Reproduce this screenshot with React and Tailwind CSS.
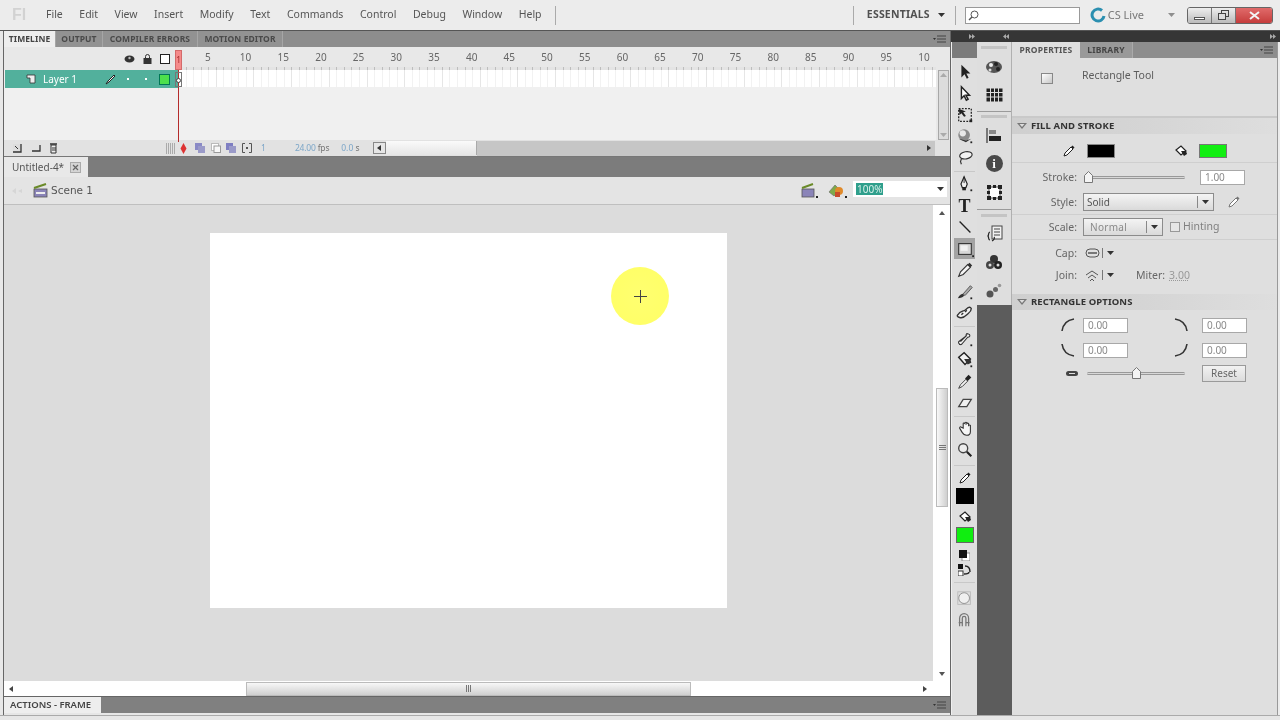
import React from "react";

const Ico = ({ w = 16, h = 16, vb, children, className = "" }) => (
  <svg width={w} height={h} viewBox={vb || `0 0 ${w} ${h}`} className={`shrink-0 ${className}`}>{children}</svg>
);

const Caret = ({ className = "" }) => (
  <svg width="7" height="4" viewBox="0 0 7 4" className={`shrink-0 ${className}`}><path d="M0 0h7L3.5 4z" fill="#333" /></svg>
);

const MenuLines = () => (
  <Ico w={14} h={9}>
    <path d="M0 3h3L1.5 5z" fill="#333" />
    <path d="M4 1h9M4 4h9M4 7h9" stroke="#444" strokeWidth="1.2" />
  </Ico>
);

const Pencil = ({ c = "#222" }) => (
  <Ico w={14} h={14}>
    <path d="M2 12l1-3 6-6 2 2-6 6z" fill="#fff" stroke={c} strokeWidth="1" />
    <path d="M9 3l1.5-1.5 2 2L11 5z" fill={c} />
  </Ico>
);

const Bucket = () => (
  <Ico w={14} h={14}>
    <path d="M2 6l5-4 5 5-5 4z" fill="#fff" stroke="#222" strokeWidth="1.2" />
    <path d="M7 7l5 0 1 3-3 2z" fill="#222" />
  </Ico>
);

const tools = {
  arrow: <path d="M6 2v14l3.5-3.5 2.5 5 2-1-2.5-4.8H16z" fill="#222" />,
  sub: <path d="M6 3v13l3-3 2.5 5 2-1-2.5-4.5H15z" fill="#fff" stroke="#222" strokeWidth="1.6" />,
  free: (
    <g>
      <rect x="3" y="3" width="14" height="14" fill="none" stroke="#222" strokeWidth="1.4" strokeDasharray="2 1.5" />
      <path d="M3 3l8 3-3 1 3 4-2 1-3-4-2 2z" fill="#222" />
      <rect x="15" y="15" width="3" height="3" fill="#222" />
    </g>
  ),
  ball: (
    <g>
      <circle cx="9" cy="9" r="6.5" fill="#8a8a8a" />
      <circle cx="7.5" cy="7" r="3.5" fill="#e8e8e8" />
      <path d="M3 13l8 4 6-4-6 2z" fill="#333" />
      <rect x="16" y="16" width="2" height="2" fill="#222" />
    </g>
  ),
  lasso: (
    <g fill="none" stroke="#333" strokeWidth="1.3">
      <ellipse cx="11" cy="7" rx="7" ry="4" transform="rotate(-10 11 7)" fill="#f2f2f2" />
      <path d="M6 11l-1 3 1 3" />
    </g>
  ),
  pen: (
    <g>
      <path d="M9 2l3.5 8-1.5 4H7l-1.5-4z" fill="#f0f0f0" stroke="#222" strokeWidth="1.3" />
      <path d="M9 2v7" stroke="#222" />
      <rect x="7" y="14" width="4" height="3" fill="#222" />
      <rect x="16" y="16" width="2" height="2" fill="#222" />
    </g>
  ),
  line: <path d="M4 4l12 12" stroke="#222" strokeWidth="1.5" />,
  rect: (
    <g>
      <rect x="3" y="4" width="14" height="12" fill="#d8d8d8" stroke="#333" strokeWidth="1.2" />
      <rect x="5" y="6" width="8" height="6" fill="#f2f2f2" />
      <rect x="18" y="17" width="2" height="2" fill="#222" />
    </g>
  ),
  pencil: (
    <g>
      <path d="M3 17l2-5 8-8 3 3-8 8z" fill="#f4f4f4" stroke="#333" strokeWidth="1.2" />
      <path d="M13 4l2-2 3 3-2 2z" fill="#333" />
    </g>
  ),
  brush: (
    <g>
      <path d="M2 17c2-4 4-5 6-5l1 2c-1 2-4 3-7 3z" fill="#333" />
      <path d="M8 12l8-9 2 2-8 9z" fill="#aaa" stroke="#333" strokeWidth=".8" />
      <rect x="16" y="16" width="2" height="2" fill="#222" />
    </g>
  ),
  deco: (
    <g fill="none" stroke="#333" strokeWidth="1.5">
      <path d="M2 12c3-5 6-3 9-6s5-3 6-1c0 4-3 5-5 7s-5 4-8 3-3-2-2-3z" fill="#f0f0f0" />
      <path d="M6 12l2-2M10 9l2-2" />
    </g>
  ),
  bone: (
    <g>
      <path d="M5 13l7-7M3 13c-1 2 1 2 1 3 1 0 2 1 3-1l6-7c2 0 3-1 2-3-1 0-1-1-3-1-1 1-1 2-1 3z" fill="#f2f2f2" stroke="#333" strokeWidth="1.2" />
      <rect x="16" y="16" width="2" height="2" fill="#222" />
    </g>
  ),
  bucket: (
    <g>
      <path d="M3 7l6-5 7 7-6 6z" fill="#f2f2f2" stroke="#222" strokeWidth="1.6" />
      <path d="M9 9h7l1 4-4 2z" fill="#333" />
      <rect x="16" y="16" width="2" height="2" fill="#222" />
    </g>
  ),
  drop: (
    <g>
      <path d="M3 17l2-4 6-6 2 2-6 6z" fill="#f2f2f2" stroke="#333" />
      <path d="M10 6l4-4 3 3-4 4z" fill="#222" />
    </g>
  ),
  eraser: <path d="M3 14l5-8h9l-5 8z" fill="#f0f0f0" stroke="#444" strokeWidth="1.4" />,
  hand: (
    <path d="M4 9l3 5c1 2 3 3 5 3 3 0 4-2 4-4V6c-1-1-2 0-2 1V4c-1-1-2 0-2 0V3c-1-1-2 0-2 0v1C9 3 8 3 8 4v5L6 8C5 7 4 8 4 9z" fill="#f6f6f6" stroke="#333" strokeWidth="1.2" />
  ),
  zoom: (
    <g>
      <circle cx="8" cy="8" r="5" fill="#ececec" stroke="#444" strokeWidth="1.5" />
      <path d="M12 12l5 5" stroke="#222" strokeWidth="2.4" />
    </g>
  ),
  sm: (
    <g>
      <circle cx="9" cy="9" r="6" fill="#f0f0f0" stroke="#888" />
      <rect x="2" y="2" width="14" height="14" fill="none" stroke="#bbb" />
    </g>
  ),
  st: (
    <g fill="none" stroke="#777" strokeWidth="1.4">
      <path d="M4 17V8a5 5 0 0 1 10 0v9" />
      <path d="M7 17V8a2 2 0 0 1 4 0v9" />
      <path d="M3 13h4M11 13h4" />
    </g>
  ),
};

const Tool = ({ n, active }) => (
  <div className="flex h-[21.5px] w-full items-center justify-center">
    <div className={`flex h-[21px] w-[21px] items-center justify-center ${active ? "bg-[#a3a3a3]" : ""}`}>
      {n === "t" ? (
        <span className="font-['Liberation_Serif',serif] text-[18px] leading-none font-bold text-[#222]">T</span>
      ) : (
        <Ico w={18} h={18} vb="0 0 20 20">{tools[n]}</Ico>
      )}
    </div>
  </div>
);

const ToolSep = ({ className = "" }) => <div className={`mx-[2px] h-px bg-[#c8c8c8] ${className}`} />;

const Toolbar = () => (
  <div className="flex h-full w-[27px] shrink-0 flex-col border-r border-[#8a8a8a] border-l border-l-[#f0f0f0] bg-[#dfdfdf]">
    <div className="h-[16px] shrink-0 bg-[#7b7b7b]" />
    <div className="mt-[3px] flex flex-col">
      <Tool n="arrow" />
      <Tool n="sub" />
      <Tool n="free" />
      <Tool n="ball" />
      <Tool n="lasso" />
      <ToolSep className="my-[2px]" />
      <Tool n="pen" />
      <Tool n="t" />
      <Tool n="line" />
      <Tool n="rect" active />
      <Tool n="pencil" />
      <Tool n="brush" />
      <Tool n="deco" />
      <ToolSep className="my-[1.5px]" />
      <Tool n="bone" />
      <Tool n="bucket" />
      <Tool n="drop" />
      <Tool n="eraser" />
      <ToolSep className="my-[1.5px]" />
      <Tool n="hand" />
      <Tool n="zoom" />
      <ToolSep className="mt-[4px] mb-[4px]" />
      <div className="flex h-[16px] items-center justify-center"><Pencil /></div>
      <div className="mx-auto mt-[2px] h-[16px] w-[18px] bg-black" />
      <div className="mt-[5px] flex h-[16px] items-center justify-center"><Bucket /></div>
      <div className="mx-auto mt-[2px] h-[16px] w-[18px] border border-[#666] bg-[#10ee10]" />
      <div className="mt-[6px] flex h-[12px] items-center justify-center">
        <Ico w={11} h={11}><rect x="3" y="3" width="8" height="8" fill="#fff" stroke="#888" /><rect x="0" y="0" width="8" height="8" fill="#111" /></Ico>
      </div>
      <div className="mt-[3px] flex h-[12px] items-center justify-center">
        <Ico w={13} h={12}><rect x="0" y="0" width="5" height="5" fill="#111" /><rect x="0" y="7" width="5" height="5" fill="#fff" stroke="#333" /><path d="M7 2c3 0 5 2 5 6M6 10c3 0 5-1 5-2" stroke="#222" fill="none" strokeWidth="1.4" /></Ico>
      </div>
      <ToolSep className="mt-[6px] mb-[5px]" />
      <Tool n="sm" />
      <Tool n="st" />
    </div>
  </div>
);

const DockIcon = ({ children }) => <div className="flex h-[28.5px] items-center justify-center">{children}</div>;

const Handle = ({ className = "" }) => <div className={`mx-[4px] h-[3px] bg-[#c4c4c4] ${className}`} />;

const Dock = () => (
  <div className="flex h-full w-[35px] shrink-0 flex-col bg-[#5c5c5c]">
    <div className="flex flex-col border-r border-[#b0b0b0] bg-[#dedede]">
      <Handle className="mt-[4px] mb-[3px]" />
      <DockIcon>
        <Ico w={18} h={15}><ellipse cx="9" cy="8" rx="8" ry="6" fill="#555" /><circle cx="6" cy="6" r="2" fill="#eee" /><circle cx="11" cy="5" r="2" fill="#222" /><circle cx="13" cy="10" r="2" fill="#222" /><circle cx="5" cy="11" r="1.5" fill="#ddd" /></Ico>
      </DockIcon>
      <DockIcon>
        <Ico w={17} h={14}>
          <rect x="0.5" y="0.5" width="16" height="13" fill="#222" />
          <path d="M0 4.5h17M0 9h17M4.5 0v14M8.5 0v14M12.5 0v14" stroke="#ddd" strokeWidth="1" />
        </Ico>
      </DockIcon>
      <div className="mt-[2px] h-px bg-[#9a9a9a]" />
      <Handle className="mt-[3px] mb-[3px]" />
      <DockIcon>
        <Ico w={16} h={15}><path d="M1 0v15" stroke="#555" strokeWidth="1.5" /><rect x="3" y="2" width="7" height="4" fill="#888" /><rect x="3" y="8" width="12" height="5" fill="#222" /></Ico>
      </DockIcon>
      <DockIcon>
        <div className="flex h-[17px] w-[17px] items-center justify-center rounded-full bg-[#4a4a4a] font-['Liberation_Serif',serif] text-[13px] leading-none font-bold text-white">i</div>
      </DockIcon>
      <DockIcon>
        <Ico w={15} h={15}><rect x="2" y="2" width="11" height="11" fill="#fff" stroke="#555" /><path d="M0 0h4v4H0zM11 0h4v4h-4zM0 11h4v4H0zM11 11h4v4h-4zM6 0h3v3H6zM6 12h3v3H6zM0 6h3v3H0zM12 6h3v3h-3z" fill="#222" /></Ico>
      </DockIcon>
      <div className="mt-[2px] h-px bg-[#9a9a9a]" />
      <Handle className="mt-[4px] mb-[3px]" />
      <DockIcon>
        <Ico w={18} h={17}><rect x="7" y="1" width="10" height="13" fill="#f2f2f2" stroke="#444" /><path d="M9 4h6M9 7h6M9 10h6" stroke="#444" /><path d="M5 7c-2 0-1 3-2 4 1 1 0 4 2 4M9 12c1 1 0 3-2 4" fill="none" stroke="#222" strokeWidth="1.2" /></Ico>
      </DockIcon>
      <DockIcon>
        <Ico w={16} h={15}><circle cx="8" cy="4" r="4" fill="#333" /><circle cx="4" cy="10" r="4" fill="#444" /><circle cx="12" cy="10" r="4" fill="#222" /><circle cx="4" cy="10" r="1.5" fill="#ddd" /><circle cx="12" cy="10" r="1.5" fill="#ddd" /></Ico>
      </DockIcon>
      <DockIcon>
        <Ico w={16} h={15}><circle cx="4" cy="11" r="3.5" fill="#555" /><circle cx="9.5" cy="6.5" r="2.5" fill="#666" /><circle cx="13.5" cy="2.5" r="1.8" fill="#999" /></Ico>
      </DockIcon>
    </div>
  </div>
);

const Lbl = ({ children }) => (
  <span className="w-[71px] shrink-0 pt-[1px] pr-[6px] text-right">{children}</span>
);

const Field = ({ v, w = "w-[45px]", dim }) => (
  <div className={`flex h-[15px] ${w} shrink-0 items-center border border-[#a8a8a8] bg-white pl-[4px] text-[10px] ${dim ? "text-[#9a9a9a]" : "text-[#8a8a8a]"}`}>{v}</div>
);

const Section = ({ t }) => (
  <div className="flex h-[16px] items-center gap-[4px] bg-gradient-to-r from-[#cfcfcf] via-[#d5d5d5] to-[#dedede] pl-[5px] text-[9.5px] font-bold tracking-[.1px] text-[#333]">
    <Ico w={10} h={6}><path d="M0 0h10L5 6z" fill="#777" /><path d="M2.5 1h5L5 4z" fill="#ddd" /></Ico>
    {t}
  </div>
);

const Slider = ({ w, at }) => (
  <div className={`relative h-[3px] ${w} shrink-0 rounded-sm border-y border-[#999] bg-[#d8d8d8]`}>
    <svg width="9" height="12" viewBox="0 0 9 12" className={`absolute top-[-6px] ${at}`}>
      <path d="M4.5 0.5L8.5 4.5v7h-8v-7z" fill="#f4f4f4" stroke="#777" />
    </svg>
  </div>
);

const Drop = ({ v, w, dim }) => (
  <div className={`flex h-[18px] ${w} shrink-0 items-center justify-between border border-[#8c8c8c] bg-gradient-to-b from-[#f4f4f4] to-[#dadada] pl-[3px] text-[10px] ${dim ? "text-[#8a8a8a]" : "text-[#555]"}`}>
    <span className={dim ? "pl-[3px] tracking-[.3px]" : ""}>{v}</span>
    <span className="flex items-center gap-[3px] pr-[3px]"><span className="h-[12px] w-px bg-[#888]" /><Caret className="mx-[1px]" /></span>
  </div>
);

const Corner = ({ d }) => (
  <Ico w={16} h={16} vb="0 0 16 16"><path d={d} fill="none" stroke="#333" strokeWidth="1.6" /></Ico>
);

const Properties = () => (
  <div className="flex min-w-0 flex-1 flex-col border-r border-[#999] bg-[#dfdfdf] text-[#666]">
    <div className="flex h-[16px] shrink-0 items-stretch bg-[#8d8d8d] text-[8.5px] font-bold tracking-[.2px]">
      <div className="flex w-[68px] items-center justify-center bg-[#dfdfdf] text-[#555]">PROPERTIES</div>
      <div className="flex w-[53px] items-center justify-center border-r border-[#aaa] bg-[#999] text-[#444]">LIBRARY</div>
      <div className="ml-auto flex items-center pr-[3px]"><MenuLines /></div>
    </div>
    <div className="flex h-[60px] shrink-0 items-start border-b-2 border-[#c9c9c9]">
      <div className="mt-[15px] ml-[29px] h-[11px] w-[12px] border border-[#888] bg-gradient-to-br from-white to-[#c8c8c8]" />
      <span className="mt-[10px] ml-[29px] text-[10.5px] leading-[14px] text-[#5c5c5c]">Rectangle Tool</span>
    </div>
    <Section t="FILL AND STROKE" />
    <div className="flex h-[29px] shrink-0 items-center border-b border-[#cfcfcf] pt-[6px]">
      <div className="ml-[50px]"><Pencil /></div>
      <div className="ml-[11px] h-[14px] w-[28px] border border-[#888] bg-black" />
      <div className="ml-[59px]"><Bucket /></div>
      <div className="ml-[11px] h-[14px] w-[28px] border border-[#777] bg-[#12ee12]" />
    </div>
    <div className="flex h-[27px] shrink-0 items-center pt-[1px] text-[10.5px]">
      <Lbl>Stroke:</Lbl>
      <Slider w="ml-[1px] w-[101px]" at="left-0" />
      <div className="ml-[15px]"><Field v="1.00" /></div>
    </div>
    <div className="flex h-[25px] shrink-0 items-center border-b border-[#cfcfcf] text-[10.5px]">
      <Lbl>Style:</Lbl>
      <Drop v="Solid" w="w-[131px]" />
      <div className="ml-[13px]"><Pencil c="#777" /></div>
    </div>
    <div className="flex h-[25px] shrink-0 items-center border-b border-[#cfcfcf] text-[10.5px]">
      <Lbl>Scale:</Lbl>
      <Drop v="Normal" w="w-[80px]" dim />
      <span className="ml-[7px] h-[10px] w-[10px] border border-[#999] bg-[#e6e6e6]" />
      <span className="ml-[3px] text-[#808080]">Hinting</span>
    </div>
    <div className="mt-[2px] flex h-[22px] shrink-0 items-center text-[10.5px]">
      <Lbl>Cap:</Lbl>
      <Ico w={16} h={10} className="ml-[2px]"><rect x="1" y="1" width="13" height="8" rx="4" fill="none" stroke="#555" /><path d="M3 5h9" stroke="#555" strokeWidth="1.5" /></Ico>
      <span className="ml-[1px] h-[10px] w-px bg-[#777]" />
      <Caret className="ml-[4px]" />
    </div>
    <div className="flex h-[22px] shrink-0 items-center text-[10.5px]">
      <Lbl>Join:</Lbl>
      <Ico w={14} h={11} className="ml-[2px]"><path d="M1 5l6-4 6 4M3 8l4-3 4 3M5 11l2-2 2 2" fill="none" stroke="#555" /></Ico>
      <span className="ml-[3px] h-[10px] w-px bg-[#777]" />
      <Caret className="ml-[4px]" />
      <span className="ml-[22px] pt-[1px]">Miter:</span>
      <span className="ml-[4px] pt-[1px] text-[#999] underline decoration-dotted">3.00</span>
    </div>
    <div className="mt-[8px] pt-0"><Section t="RECTANGLE OPTIONS" /></div>
    <div className="mt-[7px] flex h-[16px] shrink-0 items-center">
      <div className="ml-[48px]"><Corner d="M14 2C7 3 3 7 2 14" /></div>
      <div className="ml-[7px]"><Field v="0.00" /></div>
      <div className="ml-[45px]"><Corner d="M2 2c7 1 11 5 12 12" /></div>
      <div className="ml-[13px]"><Field v="0.00" /></div>
    </div>
    <div className="mt-[9px] flex h-[16px] shrink-0 items-center">
      <div className="ml-[48px]"><Corner d="M2 2c1 7 5 11 12 12" /></div>
      <div className="ml-[7px]"><Field v="0.00" /></div>
      <div className="ml-[45px]"><Corner d="M14 2c-1 7-5 11-12 12" /></div>
      <div className="ml-[13px]"><Field v="0.00" /></div>
    </div>
    <div className="mt-[7px] flex h-[17px] shrink-0 items-center">
      <Ico w={12} h={7} className="ml-[54px]"><rect x="0" y="1" width="12" height="5" rx="2.5" fill="#444" /><path d="M3 3.5h6" stroke="#ddd" /></Ico>
      <Slider w="ml-[9px] w-[98px]" at="left-[45px]" />
      <div className="ml-[17px] flex h-[17px] w-[44px] items-center justify-center border border-[#9a9a9a] bg-gradient-to-b from-[#f2f2f2] to-[#dcdcdc] text-[10px] text-[#666]">Reset</div>
    </div>
  </div>
);

const MENU = ["File", "Edit", "View", "Insert", "Modify", "Text", "Commands", "Control", "Debug", "Window", "Help"];
const NUMS = [5, 10, 15, 20, 25, 30, 35, 40, 45, 50, 55, 60, 65, 70, 75, 80, 85, 90, 95, 10];

const TopBar = () => (
  <div className="flex h-[30px] shrink-0 items-center bg-[#ececec] text-[#555]">
    <span className="ml-[12px] w-[34px] font-['Liberation_Sans',sans-serif] text-[16px] font-bold text-[#d2d2d2]">Fl</span>
    <div className="flex gap-[16.5px] text-[10.5px]">
      {MENU.map((m) => <span key={m}>{m}</span>)}
    </div>
    <div className="ml-[13px] h-[19px] w-px bg-[#aaa]" />
    <div className="ml-auto h-[19px] w-px bg-[#aaa]" />
    <span className="ml-[13px] text-[10.5px] font-bold tracking-[.2px] text-[#505050]">ESSENTIALS</span>
    <Caret className="ml-[8px]" />
    <div className="ml-[10px] h-[19px] w-px bg-[#aaa]" />
    <div className="ml-[9px] flex h-[17px] w-[115px] items-center border border-[#999] bg-white pl-[2px]">
      <Ico w={11} h={11}><circle cx="6.5" cy="4.5" r="3.5" fill="none" stroke="#555" /><path d="M4 7l-3 3" stroke="#555" strokeWidth="1.4" /></Ico>
    </div>
    <Ico w={16} h={16} className="ml-[10px]"><path d="M12 3.5A6 6 0 1 0 14 9" fill="none" stroke="#2b8fb0" strokeWidth="3" /></Ico>
    <span className="ml-[2px] text-[11px] text-[#777]">CS Live</span>
    <Caret className="ml-[24px] opacity-50" />
    <div className="mr-[7px] ml-[12px] flex h-[17px] w-[86px] overflow-hidden rounded-[3px] border border-[#666]">
      <div className="flex w-[24px] items-end justify-center border-r border-[#777] bg-gradient-to-b from-[#eee] to-[#bbb] pb-[3px]"><span className="h-[3px] w-[11px] border border-[#555] bg-white" /></div>
      <div className="flex w-[24px] items-center justify-center border-r border-[#777] bg-gradient-to-b from-[#eee] to-[#bbb]">
        <Ico w={11} h={10}><rect x="3.5" y="0.5" width="7" height="6" fill="none" stroke="#444" /><rect x="0.5" y="3.5" width="7" height="6" fill="#ddd" stroke="#444" /></Ico>
      </div>
      <div className="flex flex-1 items-center justify-center bg-gradient-to-b from-[#e06a6a] to-[#c63c3c]">
        <Ico w={11} h={9}><path d="M1 1l9 7M10 1L1 8" stroke="#f2f2f2" strokeWidth="2" /></Ico>
      </div>
    </div>
  </div>
);

const Tab = ({ t, w, active }) => (
  <div className={`flex ${w} items-center justify-center border-r border-[#a6a6a6] ${active ? "bg-[#eeeeee] text-[#444]" : "bg-[#929292] text-[#4a4a4a]"}`}>{t}</div>
);

const Timeline = () => (
  <div className="relative h-[110px] shrink-0 bg-[#f0f0f0] text-[#555]">
    <div className="flex h-[93px] items-stretch">
      <div className="flex w-[174px] shrink-0 flex-col">
        <div className="flex h-[23px] items-center justify-end gap-[8px] bg-[#e8e8e8] pr-[7px]">
          <Ico w={11} h={8}><ellipse cx="5.5" cy="4" rx="5" ry="3.5" fill="#333" /><circle cx="5.5" cy="3" r="1.2" fill="#bbb" /></Ico>
          <Ico w={9} h={10}><rect x="0.5" y="4" width="8" height="6" fill="#333" /><path d="M2.5 4V2.5a2 2 0 0 1 4 0V4" fill="none" stroke="#333" /></Ico>
          <span className="mr-[1px] h-[10px] w-[10px] border-[1.5px] border-[#222] bg-white" />
        </div>
        <div className="ml-[1px] flex h-[18px] items-center bg-[#52b09c] pl-[21px] text-white">
          <Ico w={10} h={10}><path d="M1 1h8v8H4V4H1z" fill="#eee" stroke="#333" strokeWidth=".8" /></Ico>
          <span className="ml-[7px] text-[10px]">Layer 1</span>
          <div className="ml-[28px]"><Ico w={12} h={12}><path d="M1 11l2-3 6-6 1 1-6 6z" fill="#fff" stroke="#222" /></Ico></div>
          <span className="ml-[10px] h-[2px] w-[2px] bg-white" />
          <span className="ml-[16px] h-[2px] w-[2px] bg-white" />
          <span className="ml-[12px] h-[11px] w-[11px] border border-[#075] bg-[#4de04d]" />
        </div>
        <div className="flex-1 bg-[#f0f0f0]" />
      </div>
      <div className="flex min-w-0 flex-1 flex-col">
        <div className="relative flex h-[23px] items-center overflow-hidden bg-[#e8e8e8] pb-[2px] text-[10px] text-[#666]">
          <div className="flex shrink-0 pl-[11px]">
            {NUMS.map((n, i) => (
              <span key={i} className="w-[37.7px] shrink-0 text-center">{n}</span>
            ))}
          </div>
          <div className="absolute right-0 bottom-0 left-0 h-[3px] bg-[repeating-linear-gradient(90deg,#bdbdbd_0,#bdbdbd_1px,#e4e4e4_1px,#e4e4e4_7.54px)]" />
        </div>
        <div className="h-[17px] bg-[repeating-linear-gradient(90deg,#e6e6e6_0,#e6e6e6_1px,#fff_1px,#fff_7.54px,#f2f2f2_7.54px,#f2f2f2_8.54px,#fff_8.54px,#fff_15.08px,#f2f2f2_15.08px,#f2f2f2_16.08px,#fff_16.08px,#fff_22.62px,#f2f2f2_22.62px,#f2f2f2_23.62px,#fff_23.62px,#fff_30.16px,#f2f2f2_30.16px,#f2f2f2_31.16px,#fff_31.16px,#fff_37.7px)]" />
        <div className="flex-1" />
      </div>
      <div className="flex w-[14px] shrink-0 flex-col bg-[#e8e8e8]">
        <div className="h-[23px] shrink-0" />
        <div className="ml-[2px] flex w-[11px] flex-1 flex-col border border-[#a8a8a8] bg-[#dcdcdc]">
          <div className="flex flex-1 items-start justify-center pt-[2px]"><Ico w={7} h={4}><path d="M0 4L3.5 0 7 4z" fill="#aaa" /></Ico></div>
          <div className="flex flex-1 items-end justify-center pb-[2px]"><Ico w={7} h={4}><path d="M0 0L3.5 4 7 0z" fill="#aaa" /></Ico></div>
        </div>
      </div>
    </div>
    <div className="flex h-[17px] items-center border-b border-[#777] bg-[#e2e2e2]">
      <Ico w={10} h={10} className="ml-[8px]"><path d="M1 1h8v8H1z" fill="#ddd" /><path d="M1 9h8V1" fill="none" stroke="#333" strokeWidth="1.3" /><path d="M3 3l3 3" stroke="#333" /></Ico>
      <Ico w={10} h={10} className="ml-[9px]"><path d="M1 8h8V2" fill="none" stroke="#333" strokeWidth="1.3" /></Ico>
      <Ico w={9} h={11} className="ml-[8px]"><path d="M2 2h5v8H2z" fill="#eee" stroke="#333" /><path d="M1 1h7" stroke="#333" strokeWidth="1.5" /><path d="M4 4v4M6 4v4" stroke="#333" /></Ico>
      <span className="ml-[108px] h-[11px] w-[10px] bg-[repeating-linear-gradient(90deg,#aaa_0,#aaa_1px,#e2e2e2_1px,#e2e2e2_2px)]" />
      <Ico w={7} h={11} className="ml-[4px]"><path d="M3.5 0l3 5.5-3 5.5-3-5.5z" fill="#d33" /></Ico>
      <Ico w={10} h={10} className="ml-[8px]"><rect x="0" y="0" width="7" height="7" fill="#8a8ac6" /><rect x="3" y="3" width="7" height="7" fill="#9a9ac8" /></Ico>
      <Ico w={10} h={10} className="ml-[6px]"><rect x="0.5" y="0.5" width="7" height="7" fill="#fff" stroke="#bbb" /><rect x="3" y="3" width="6.5" height="6.5" fill="#f8f8f8" stroke="#999" /></Ico>
      <Ico w={10} h={10} className="ml-[5px]"><rect x="0" y="0" width="7" height="7" fill="#7e7ec2" /><rect x="3" y="3" width="7" height="7" fill="#9a9ac8" /></Ico>
      <Ico w={10} h={10} className="ml-[6px]"><path d="M3 0.5H.5v9H3M7 .5h2.5v9H7" fill="none" stroke="#555" /><rect x="4" y="4" width="2" height="2" fill="#555" /></Ico>
      <span className="ml-[9px] text-[8.5px] text-[#7ca6c8]">1</span>
      <span className="ml-[29px] text-[8.5px] tracking-[-.2px] whitespace-nowrap text-[#7ca6c8]">24.00 <span className="text-[#777]">fps</span></span>
      <span className="ml-[12px] text-[8.5px] whitespace-nowrap text-[#7ca6c8]">0.0 <span className="text-[#777]">s</span></span>
      <div className="ml-[13px] flex h-[12px] w-[13px] shrink-0 items-center justify-center border border-[#888] bg-[#e6e6e6]"><Ico w={4} h={6}><path d="M4 0v6L0 3z" fill="#333" /></Ico></div>
      <div className="h-[14px] w-[91px] shrink-0 border-r border-[#aaa] bg-gradient-to-b from-[#fafafa] to-[#e6e6e6]" />
      <div className="flex h-[15px] w-[458px] shrink-0 items-center justify-end bg-[#c6c6c6] pr-[4px]"><Ico w={4} h={6}><path d="M0 0v6l4-3z" fill="#333" /></Ico></div>
    </div>
    {/* playhead over the frames */}
    <div className="absolute top-0 left-[171px] flex flex-col items-center">
      <div className="mt-[3px] flex h-[20px] w-[7px] items-center justify-center border border-[#d46a6a] bg-[#f58a8a] text-[9px] text-[#a33]">1</div>
      <div className="relative h-[72px] w-px bg-[#b52b2b]">
        <span className="absolute top-[2px] left-[-3px] h-[15px] w-[7px] border border-[#777]" />
        <span className="absolute top-[8px] left-[-2px] h-[5px] w-[5px] rounded-full border border-[#444] bg-white" />
      </div>
    </div>
  </div>
);

const SceneBar = () => (
  <div className="flex h-[28px] shrink-0 items-center border-b border-[#bfbfbf] bg-[#e4e4e4]">
    <Ico w={10} h={6} className="ml-[8px]"><path d="M0 3l4-3v6zM10 1v4L6 3z" fill="#d6d6d6" /></Ico>
    <Ico w={15} h={15} className="ml-[11px]"><rect x="1" y="6" width="13" height="8" fill="#8a84b8" stroke="#555" strokeWidth=".8" /><rect x="3" y="9" width="9" height="2" fill="#eee" /><path d="M1 5l12-4" stroke="#6a8a28" strokeWidth="2" /></Ico>
    <span className="ml-[3px] font-['DejaVu_Sans',sans-serif] text-[10.5px] text-[#555]">Scene 1</span>
    <div className="ml-auto flex items-center">
      <Ico w={17} h={15}><rect x="1" y="6" width="12" height="8" fill="#8a84b8" stroke="#555" strokeWidth=".8" /><path d="M1 5l11-4" stroke="#6a8a28" strokeWidth="2" /><rect x="15" y="13" width="2" height="2" fill="#222" /></Ico>
      <Ico w={19} h={15} className="ml-[10px]"><path d="M1 9l6-7 5 5-6 6z" fill="#7eaa4a" stroke="#666" strokeWidth=".6" /><circle cx="11" cy="8" r="4" fill="#e08a2a" /><rect x="7" y="9" width="5" height="5" fill="#c84a2a" /><rect x="17" y="13" width="2" height="2" fill="#222" /></Ico>
      <div className="mr-[3px] mb-[4px] ml-[6px] flex h-[16px] w-[94px] items-center justify-between bg-white pr-[3px] pl-[3px]">
        <span className="bg-[#2f9f8c] px-[1px] text-[10px] leading-[12px] text-[#d8f0ea]">100%</span>
        <Caret />
      </div>
    </div>
  </div>
);

const Stage = () => (
  <div className="relative flex min-h-0 flex-1">
    <div className="min-w-0 flex-1 bg-[#dcdcdc] pt-[28px] pl-[206px]">
      <div className="relative h-[375px] w-[517px] bg-white">
        <div className="absolute top-[34px] left-[401px] flex h-[58px] w-[58px] items-center justify-center rounded-full bg-[radial-gradient(circle,#ffff70_0%,#ffff68_70%,#ffff88_88%,#ffffd8_100%)]">
          <Ico w={13} h={13}><path d="M6.5 0v13M0 6.5h13" stroke="#444" strokeWidth="1" /></Ico>
        </div>
      </div>
    </div>
    <div className="flex w-[17px] shrink-0 flex-col bg-white">
      <div className="flex h-[16px] items-center justify-center"><Ico w={6} h={4}><path d="M0 4l3-4 3 4z" fill="#555" /></Ico></div>
      <div className="mt-[167px] ml-[3px] flex h-[119px] w-[12px] items-center justify-center border border-[#bbb] bg-gradient-to-r from-[#f8f8f8] to-[#cfcfcf]">
        <span className="flex flex-col gap-px"><span className="h-px w-[7px] bg-[#777]" /><span className="h-px w-[7px] bg-[#777]" /><span className="h-px w-[7px] bg-[#777]" /></span>
      </div>
      <div className="flex flex-1 items-end justify-center pb-[5px]"><Ico w={6} h={4}><path d="M0 0l3 4 3-4z" fill="#555" /></Ico></div>
    </div>
  </div>
);

const HScroll = () => (
  <div className="flex h-[15px] shrink-0 items-center bg-white">
    <Ico w={4} h={6} className="ml-[5px]"><path d="M4 0v6L0 3z" fill="#444" /></Ico>
    <div className="ml-[233px] flex h-[14px] w-[445px] items-center justify-center border border-[#bbb] bg-gradient-to-b from-[#f8f8f8] to-[#cfcfcf]">
      <span className="flex gap-px"><span className="h-[7px] w-px bg-[#777]" /><span className="h-[7px] w-px bg-[#777]" /><span className="h-[7px] w-px bg-[#777]" /></span>
    </div>
    <Ico w={4} h={6} className="ml-[232px]"><path d="M0 0v6l4-3z" fill="#444" /></Ico>
  </div>
);

export default function App() {
  return (
    <div className="flex h-[720px] w-[1280px] flex-col overflow-hidden bg-[#e8e8e8] font-['Noto_Sans','Liberation_Sans',sans-serif] blur-[0.3px]">
      <TopBar />
      <div className="flex min-h-0 flex-1 border-t border-[#555]">
        <div className="ml-[3px] flex w-[948px] shrink-0 flex-col border-x border-[#666]">
          <div className="flex h-[16px] shrink-0 items-stretch bg-[#8d8d8d] text-[8.5px] font-bold tracking-[.1px]">
            <Tab t="TIMELINE" w="w-[52px]" active />
            <Tab t="OUTPUT" w="w-[47px]" />
            <Tab t="COMPILER ERRORS" w="w-[95px]" />
            <Tab t="MOTION EDITOR" w="w-[85px]" />
            <div className="ml-auto flex items-center pr-[3px]"><MenuLines /></div>
          </div>
          <Timeline />
          <div className="flex h-[20px] shrink-0 items-stretch bg-[#7c7c7c]">
            <div className="flex w-[84px] items-center bg-[#e8e8e8] pl-[8px] text-[10px] text-[#555]">
              <span>Untitled-4*</span>
              <span className="ml-[6px] flex h-[11px] w-[11px] items-center justify-center border border-[#aaa] bg-[#d4d4d4]">
                <Ico w={7} h={7}><path d="M1 1l5 5M6 1L1 6" stroke="#666" strokeWidth="1.2" /></Ico>
              </span>
            </div>
          </div>
          <SceneBar />
          <Stage />
          <HScroll />
          <div className="flex h-[17px] shrink-0 items-stretch border-t border-[#666] bg-[#808080]">
            <div className="flex w-[97px] items-center bg-[#eeeeee] pl-[6px] text-[9.5px] font-semibold whitespace-nowrap text-[#444]">ACTIONS - FRAME</div>
            <div className="ml-auto flex items-center pr-[3px]"><MenuLines /></div>
          </div>
          <div className="h-[2px] shrink-0 bg-[#e6e6e6]" />
        </div>
        <div className="flex min-w-0 flex-1 flex-col">
          <div className="flex h-[11px] shrink-0 items-center bg-[#363636]">
            <Ico w={6} h={5} className="ml-[18px]"><path d="M0 0l3 2.5L0 5zM3 0l3 2.5L3 5z" fill="#aaa" /></Ico>
            <Ico w={6} h={5} className="ml-[28px]"><path d="M6 0L3 2.5 6 5zM3 0L0 2.5 3 5z" fill="#aaa" /></Ico>
            <Ico w={6} h={5} className="mr-[4px] ml-auto"><path d="M0 0l3 2.5L0 5zM3 0l3 2.5L3 5z" fill="#aaa" /></Ico>
          </div>
          <div className="flex min-h-0 flex-1">
            <div className="w-[26px] shrink-0"><Toolbar /></div>
            <Dock />
            <Properties />
            <div className="w-[2px] shrink-0 bg-[#ececec]" />
          </div>
        </div>
      </div>
      <div className="h-[5px] shrink-0 border-t border-[#aaa] bg-[#e6e6e6]" />
    </div>
  );
}
